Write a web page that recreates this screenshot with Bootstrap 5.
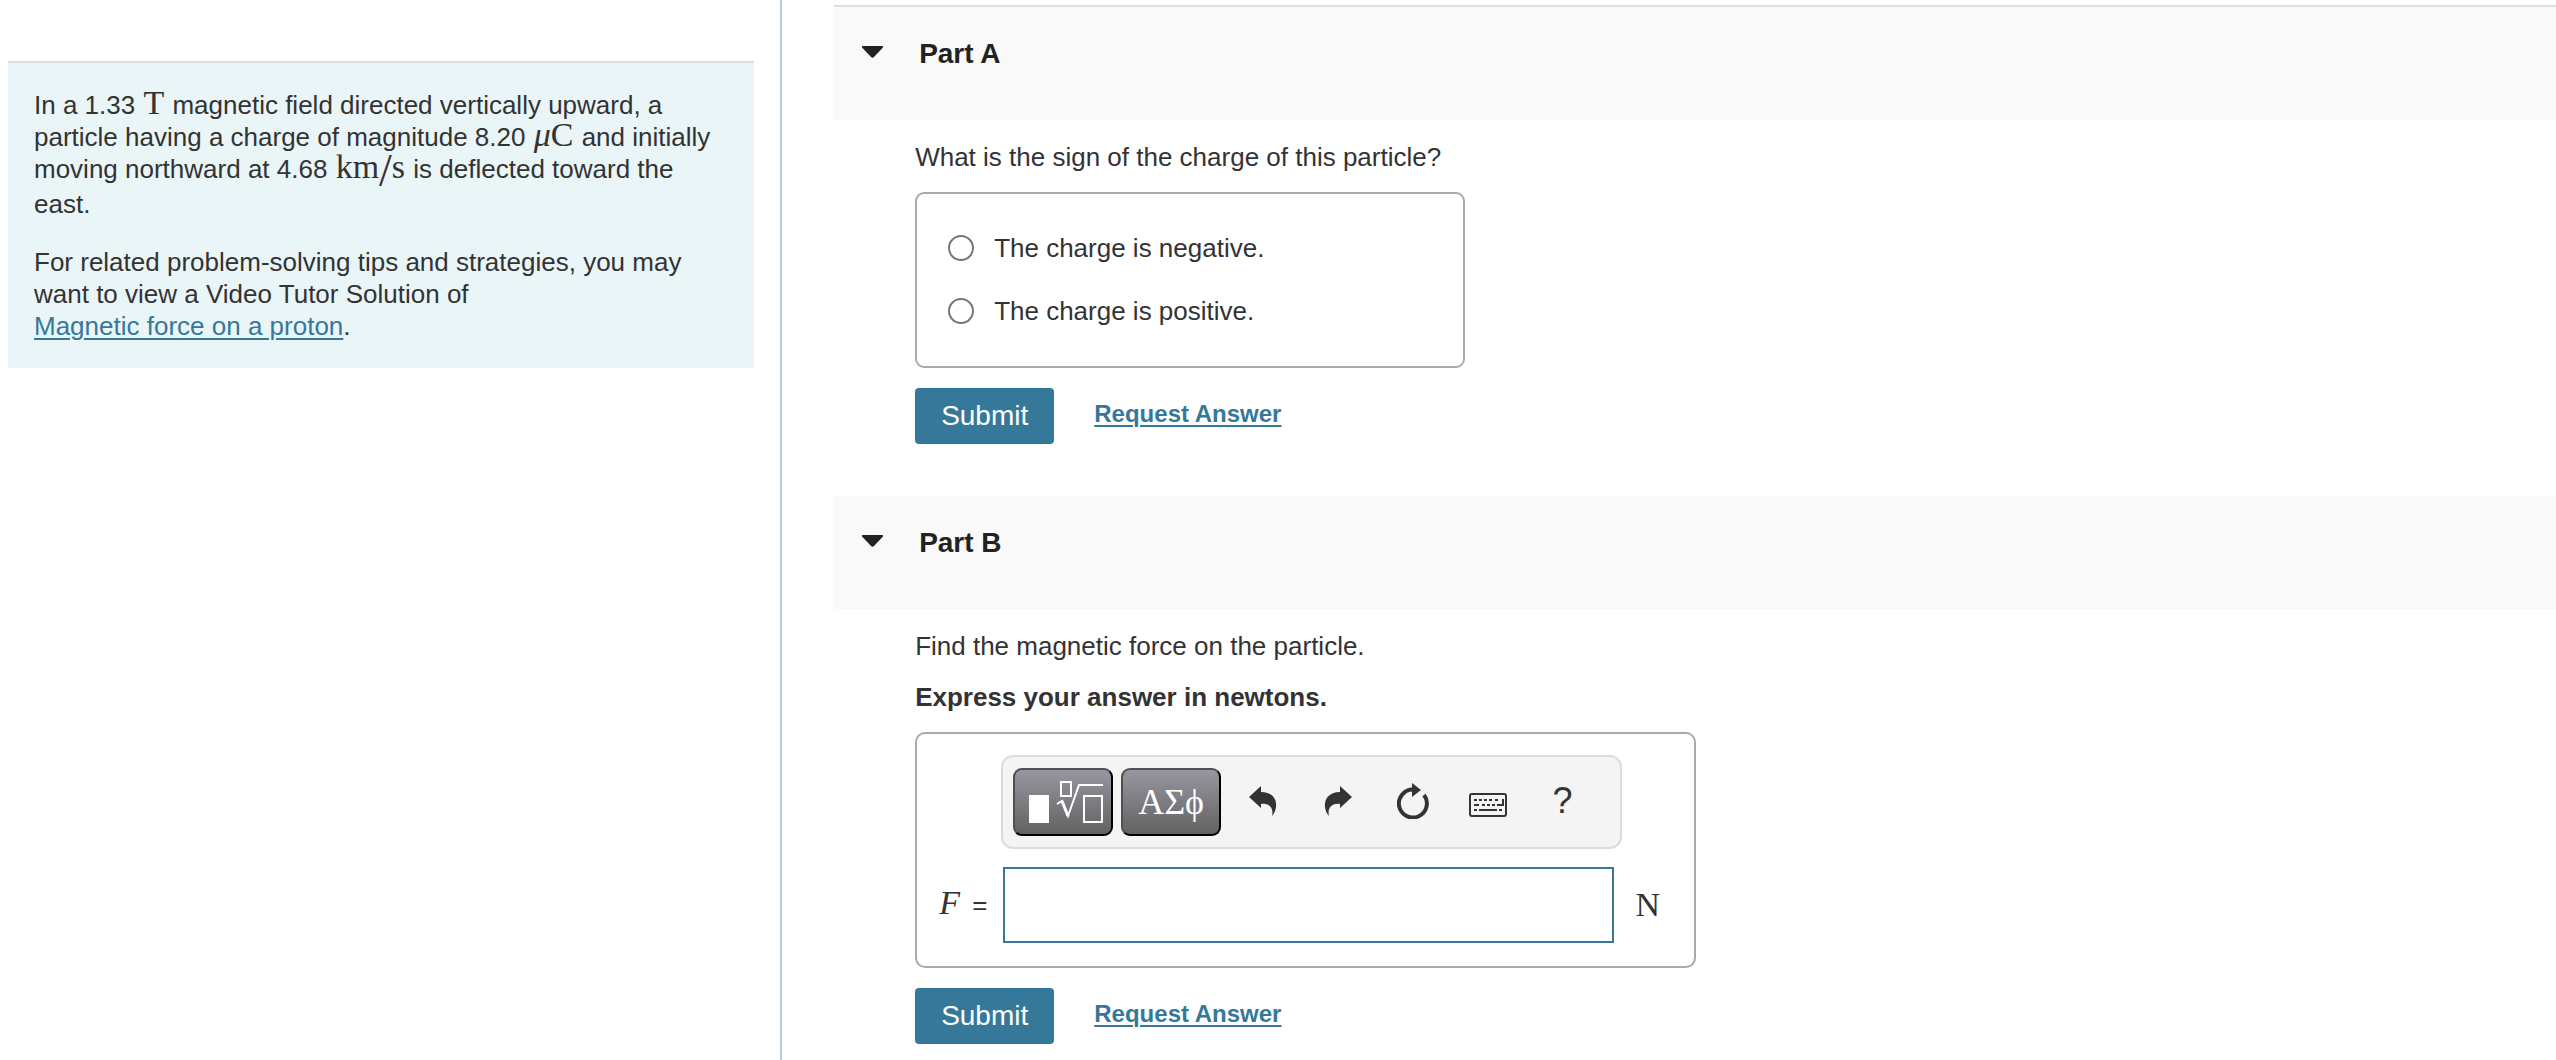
<!DOCTYPE html>
<html lang="en">
<head>
<meta charset="utf-8">
<meta name="viewport" content="width=device-width, initial-scale=1">
<title>Magnetic force on a particle</title>
<link href="https://cdn.jsdelivr.net/npm/bootstrap@5.3.0/dist/css/bootstrap.min.css" rel="stylesheet">
<style>
body{font-family:"Liberation Sans",Arial,sans-serif;font-size:26px;line-height:32px;color:#333;background:#fff}
a,a:hover{color:#36789a;text-decoration:underline;text-decoration-thickness:2px;text-underline-offset:3px}
.intro-pane{width:30.6%;border-right:2px solid #bccbdb;padding:61px 26px 0 8px}
.intro-card{background:#eaf5f8;border-top:2px solid #dcdcdf;padding:26px 26px}
.intro-card p{margin-bottom:26px}
.intro-card p:last-child{margin-bottom:0}
.tex{font-family:"Liberation Serif","Times New Roman",serif;font-size:34px;line-height:24px;margin:0 1px}
.tex-slash{font-size:46px;line-height:35px;vertical-align:-8px}
.parts-pane{padding:5px 0 0 52px;min-width:0}
.part-head{height:113px;background:#f9f9f9;padding:30px 28px 0}
.part-first{border-top:2px solid #dfdfdf;height:115px}
.part-head h2{font-size:28px;line-height:34px;font-weight:700;color:#222;margin:0}
.part-toggle{border:0;background:none;padding:0;display:flex;gap:36px;align-items:center;color:#222}
.part-toggle svg{margin-bottom:4px}
.part-body{padding:21px 24px 0 81px}
.part-body p{margin-bottom:19px}
.choices{width:550px;max-width:100%;border:2px solid #aaa;border-radius:9px;padding:38px 31px 8px}
.choices .form-check{min-height:0;padding:0;margin:0 0 31px;display:flex;align-items:center;gap:20px}
.choices .form-check-input{width:26px;height:26px;margin:0;float:none;border:2px solid #767676;background-color:#fff;flex:none}
.actions{gap:40px;margin-top:20px}
.btn-submit,.btn-submit:hover{background:#36789a;color:#fff;border-radius:4px;border:0;font-size:28px;line-height:34px;padding:11px 26px}
.request-link{font-size:24px;font-weight:700;line-height:28px;margin-bottom:4px}
.part-gap{height:52px}
.answer-box{width:781px;max-width:100%;border:2px solid #aaa;border-radius:10px;padding:21px 33px 23px 21px}
.eq-tools{margin-left:63px;width:621px;max-width:100%;height:94px;background:#f4f4f4;border:2px solid #dcdcdc;border-radius:12px;padding:0 10px;gap:8px}
.eq-dark{width:100px;height:68px;padding:0;border:2px solid;border-color:#505050 #000 #000 #505050;border-radius:9px;background:linear-gradient(#9896a0,#626262);color:#fff;font-family:"Liberation Serif","DejaVu Serif",serif;font-size:36px;line-height:40px}
.eq-actions{margin-left:-4px}
.eq-icon{width:75px;height:68px;border:0;background:none;padding:0 0 2px;color:#333;font-size:36px;line-height:40px}
.eq-icon svg{display:block;margin:0 auto}
.eq-keys{padding-top:8px}
.eq-row{margin-top:18px}
.eq-label{width:65px;white-space:nowrap}
.eq-label .tex{margin-right:5px}
.eq-field{width:612px;height:76px;border:2px solid #36789a;border-radius:0;font-size:28px}
.eq-unit{margin-left:22px}
</style>
<script src="https://cdn.jsdelivr.net/npm/bootstrap@5.3.0/dist/js/bootstrap.bundle.min.js"></script>
</head>
<body>
<div class="d-flex min-vh-100">
  <aside class="intro-pane flex-shrink-0">
    <div class="intro-card">
      <p>In a 1.33 <span class="tex">T</span> magnetic field directed vertically upward, a particle having a charge of magnitude 8.20 <span class="tex text-nowrap"><i>μ</i>C</span> and initially moving northward at 4.68 <span class="tex text-nowrap">km<span class="tex-slash">/</span>s</span> is deflected toward the east.</p>
      <p>For related problem-solving tips and strategies, you may want to view a Video Tutor Solution of <br><a href="#">Magnetic force on a proton</a>.</p>
    </div>
  </aside>
  <main class="parts-pane flex-grow-1">
    <section>
      <header class="part-head part-first">
        <h2><button class="part-toggle fw-bold" type="button"><svg width="21" height="12" viewBox="0 0 21 12" fill="currentColor"><path d="M1 0h19q2 0 .5 2L12 11q-1.500 1.500-3 0L.500 2Q-1 0 1 0z"/></svg>Part A</button></h2>
      </header>
      <div class="part-body">
        <p>What is the sign of the charge of this particle?</p>
        <div class="choices">
          <div class="form-check"><input class="form-check-input" type="radio" name="sign" id="neg"><label for="neg">The charge is negative.</label></div>
          <div class="form-check"><input class="form-check-input" type="radio" name="sign" id="pos"><label for="pos">The charge is positive.</label></div>
        </div>
        <div class="actions d-flex align-items-center">
          <button class="btn btn-submit" type="button">Submit</button>
          <a class="request-link" href="#">Request Answer</a>
        </div>
      </div>
    </section>
    <div class="part-gap"></div>
    <section>
      <header class="part-head">
        <h2><button class="part-toggle fw-bold" type="button"><svg width="21" height="12" viewBox="0 0 21 12" fill="currentColor"><path d="M1 0h19q2 0 .5 2L12 11q-1.500 1.500-3 0L.500 2Q-1 0 1 0z"/></svg>Part B</button></h2>
      </header>
      <div class="part-body">
        <p>Find the magnetic force on the particle.</p>
        <p class="fw-bold">Express your answer in newtons.</p>
        <div class="answer-box">
          <div class="eq-tools d-flex align-items-center">
            <button class="eq-dark" type="button" aria-label="Templates"><svg class="d-block" width="96" height="64" viewBox="0 0 96 64" fill="none" stroke="#fff" stroke-width="2"><path d="M14 25h20v28H14z" fill="#fff" stroke="none"/><path d="M46 12h10v14H46zM69 26h18v26H69z"/><path d="M42 34l5-3 6 15L64 15h24"/><path d="M47 31l6 15" stroke-width="3"/></svg></button>
            <button class="eq-dark" type="button">ΑΣϕ</button>
            <div class="d-flex align-items-center eq-actions">
              <button class="eq-icon" type="button" aria-label="Undo"><svg width="28" height="32" viewBox="0 0 28 32" fill="currentColor"><path d="M0 12L12 1v6c11 0 16 7 15 15-.5 4-2 7-4 9 2-8-3-13-11-12v4z"/></svg></button>
              <button class="eq-icon" type="button" aria-label="Redo"><svg width="28" height="32" viewBox="0 0 28 32" fill="currentColor"><path d="M28 12L16 1v6C5 7 0 14 1 22c.5 4 2 7 4 9-2-8 3-13 11-12v4z"/></svg></button>
              <button class="eq-icon" type="button" aria-label="Reset"><svg width="32" height="36" viewBox="0 0 32 36"><path d="M27 12a14 14 0 1 1-11-5.500" fill="none" stroke="currentColor" stroke-width="4"/><path d="M15 0l9 7-9 7z" fill="currentColor"/></svg></button>
              <button class="eq-icon eq-keys" type="button" aria-label="Keyboard shortcuts"><svg width="40" height="24" viewBox="0 0 40 24" fill="none" stroke="currentColor" stroke-width="2"><rect x="2" y="1" width="36" height="22" rx="2"/><path d="M6 7h3m2 0h3m2 0h3m2 0h3m3 0h3M6 12h5m3 0h3m2 0h3m2 0h3m2 0h6V6M6 17h3m2 0h18m2 0h3"/></svg></button>
              <button class="eq-icon" type="button" aria-label="Help">?</button>
            </div>
          </div>
          <div class="eq-row d-flex align-items-center">
            <label class="eq-label" for="force"><i class="tex">F</i> =</label>
            <input class="eq-field form-control" type="text" id="force">
            <span class="tex eq-unit">N</span>
          </div>
        </div>
        <div class="actions d-flex align-items-center">
          <button class="btn btn-submit" type="button">Submit</button>
          <a class="request-link" href="#">Request Answer</a>
        </div>
      </div>
    </section>
  </main>
</div>
</body>
</html>
